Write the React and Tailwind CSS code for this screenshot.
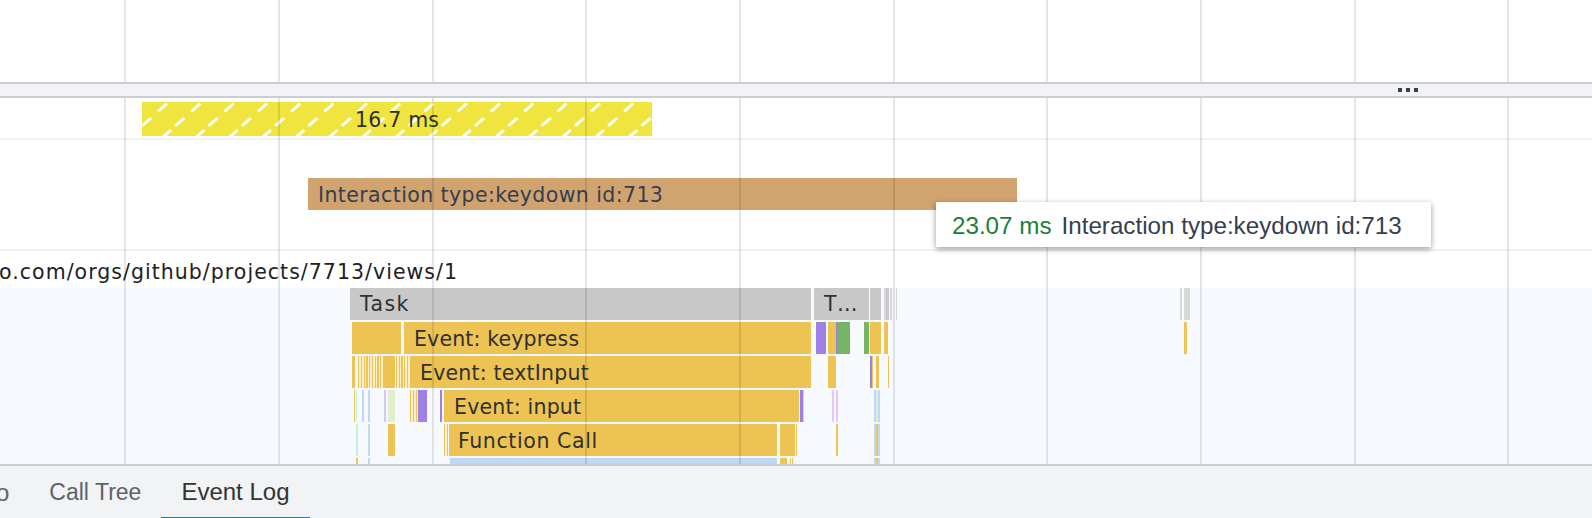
const GRID = [124, 278, 432, 585, 739, 892.5, 1046, 1200, 1354, 1507];

const Y = '#edc354';
const P = '#9f80e6';
const G = '#76b566';
const LB = '#bdd9f5';
const LG = '#c5f0d5';
const LV = '#d5c8f5';
const PK = '#e5c8f5';
const T = '#c8c8c8';
const TL = '#d8d8d8';

const taskBars = [
  [350, 811, T], [813.5, 869, T], [870, 881, T], [884, 885.5, TL], [886, 889, T], [890, 891.5, TL], [896, 897, TL],
  [1180, 1181.5, TL], [1184, 1185.5, TL], [1186, 1187.5, TL], [1188, 1189.5, TL],
];

const row1 = [
  [352, 401, Y], [404, 811, Y], [816, 823.5, P], [824, 825.5, P], [828, 833.5, Y], [834, 835.5, Y], [836, 837.5, P], [838, 849.5, G],
  [864, 865.5, G], [866, 869, G], [870, 881, Y], [884, 885.5, Y], [886, 887.5, Y], [1184, 1185.5, Y], [1186, 1187, Y],
];

const row2 = [
  [352, 355, Y], [384, 395, Y], [410, 811, Y], [828, 833.5, Y], [834, 835.5, Y], [870, 871.5, P], [872, 873, Y], [876, 877.5, Y], [878, 879, Y], [888, 889, Y],
];

const row3 = [
  [354, 355, Y], [355.5, 356, LG], [362, 363.5, LB], [368, 369.5, LB], [384, 385.5, LV], [388, 395, '#e3edcf'], [418, 427, P], [440, 441.5, P], [444, 799, Y],
  [800, 803, P], [803, 804, LV], [832, 833.5, PK], [836, 837.5, PK], [874, 875.5, LB], [876, 877.5, '#e3edcf'], [878, 879.5, LB],
];

const row4 = [
  [356, 357.5, LG], [368, 369.5, LB], [388, 395, Y], [448.5, 777, Y], [780, 795, Y], [796, 797, Y], [836, 837.5, Y], [874, 875.5, LB], [876, 877.5, Y], [878, 879.5, LB],
];

const row5 = [
  [356, 357.5, Y], [368, 369.5, LB], [450, 777, LB], [780, 787, Y], [790, 791, Y], [792, 793, Y], [874, 875.5, LB], [876, 877.5, Y], [878, 879.5, LB],
];

// packed short tasks, read as thin yellow stripes
const Stripes = ({ from, to }) => (
  <div
    className="absolute top-0 bottom-0 bg-[repeating-linear-gradient(90deg,#edc354_0,#edc354_1.25px,#fbeecb_1.25px,#fbeecb_2.75px)]"
    style={{ left: from, width: to - from }}
  />
);

const FlameRow = ({ bars, className = '', children }) => (
  <div className={`relative ${className}`}>
    {bars.map(([from, to, color], i) => (
      <div key={i} className="absolute top-0 bottom-0" style={{ left: from, width: to - from, backgroundColor: color }} />
    ))}
    {children}
  </div>
);

const Label = ({ x, className = '', children }) => (
  <span className={`absolute top-0 bottom-0 flex items-center text-[20.5px] text-[#303030] font-['DejaVu_Sans',sans-serif] ${className}`} style={{ left: x }}>
    {children}
  </span>
);

const App = () => {
  return (
    <div className="relative w-[1592px] h-[518px] overflow-hidden bg-white flex flex-col font-['Liberation_Sans',sans-serif]">
      <div className="h-[82px]" />
      <div className="h-[16px] bg-[#f1f3f4] border-y-2 border-[#cbcdd1] flex items-center justify-end pr-[174px] gap-[4px] relative z-10">
        <span className="w-[4px] h-[4px] bg-[#3c4043]" />
        <span className="w-[4px] h-[4px] bg-[#3c4043]" />
        <span className="w-[4px] h-[4px] bg-[#3c4043]" />
      </div>

      <div className="h-[42px] pt-[4px] border-b-2 border-[#f2f2f2] pl-[142px]">
        <div className="relative w-[510px] h-[34px]">
          <svg className="absolute inset-0" width="510" height="34">
            <defs>
              <pattern id="dropped" width="33.3" height="34" patternUnits="userSpaceOnUse">
                <rect width="34" height="34" fill="#f0e53f" />
                <path d="M0 24 L9 16 M33.3 24 L42.3 16 M16 9.5 L25 1.5 M20 36 L29 28" stroke="#fff" strokeWidth="3" fill="none" />
              </pattern>
            </defs>
            <rect width="510" height="34" fill="url(#dropped)" />
          </svg>
          <span className="absolute left-[213px] top-[3px] bottom-0 flex items-center tracking-[0.2px] text-[20.5px] text-[#303030] font-['DejaVu_Sans',sans-serif]">16.7 ms</span>
        </div>
      </div>

      <div className="h-[111px] pt-[38px] border-b-2 border-[#f2f2f2] pl-[308px]">
        <div className="w-[709px] h-[32px] bg-[#d1a36f] pl-[10px] pt-[2px] flex items-center tracking-[0.4px] text-[20.5px] text-[#333f50] font-['DejaVu_Sans',sans-serif]">
          Interaction type:keydown id:713
        </div>
      </div>

      <div className="h-[37px] pt-[5px] -ml-[1px] flex items-center tracking-[1.03px] text-[20.5px] text-[#202124] whitespace-nowrap font-['DejaVu_Sans',sans-serif]">
        o.com/orgs/github/projects/7713/views/1
      </div>

      <div className="h-[176px] bg-[#f6faff] flex flex-col gap-[2px]">
        <FlameRow bars={taskBars} className="h-[32px]">
          <Label x={360} className="tracking-[1.4px]">Task</Label>
          <Label x={824} className="tracking-[0.6px]">T…</Label>
        </FlameRow>
        <FlameRow bars={row1} className="h-[32px]">
          <Label x={414} className="pt-[2px] tracking-[0.15px]">Event: keypress</Label>
        </FlameRow>
        <FlameRow bars={row2} className="h-[32px]">
          <Stripes from={358} to={384} />
          <Stripes from={396} to={410} />
          <Label x={420} className="pt-[2px] tracking-[0.2px]">Event: textInput</Label>
        </FlameRow>
        <FlameRow bars={row3} className="h-[32px]">
          <Stripes from={410} to={418} />
          <Label x={454} className="pt-[2px] tracking-[0.2px]">Event: input</Label>
        </FlameRow>
        <FlameRow bars={row4} className="h-[32px]">
          <Stripes from={444} to={448} />
          <Label x={458} className="pt-[2px] tracking-[0.6px]">Function Call</Label>
        </FlameRow>
        <FlameRow bars={row5} className="h-[6px]" />
      </div>

      <div className="h-[54px] bg-[#f1f3f4] border-t-2 border-[#cbcdd1] flex items-stretch relative z-10 text-[#5f6368] whitespace-nowrap">
        <span className="-ml-[4px] pt-[1px] flex items-center text-[24px]">o</span>
        <span className="flex items-center pt-[1px] ml-[40px] text-[23px]">Call Tree</span>
        <span className="flex items-center pt-[1px] ml-[20px] px-[20px] text-[24px] text-[#333333] border-b-[1.5px] border-[#2a6fc9]">Event Log</span>
      </div>

      {GRID.map((x) => (
        <div key={x} className="absolute top-0 h-[466px] w-[2px] bg-[rgba(0,0,0,0.1)]" style={{ left: x }} />
      ))}

      <div className="absolute left-[936px] top-[202px] w-[495px] h-[45px] bg-white shadow-[0_2px_6px_rgba(0,0,0,0.4)] flex items-center pl-[16px] pt-[3px] gap-[10px] text-[24.2px] text-[#333f50] z-20 whitespace-nowrap">
        <span className="text-[#188038]">23.07 ms</span>
        <span>Interaction type:keydown id:713</span>
      </div>
    </div>
  );
};

export default App;
